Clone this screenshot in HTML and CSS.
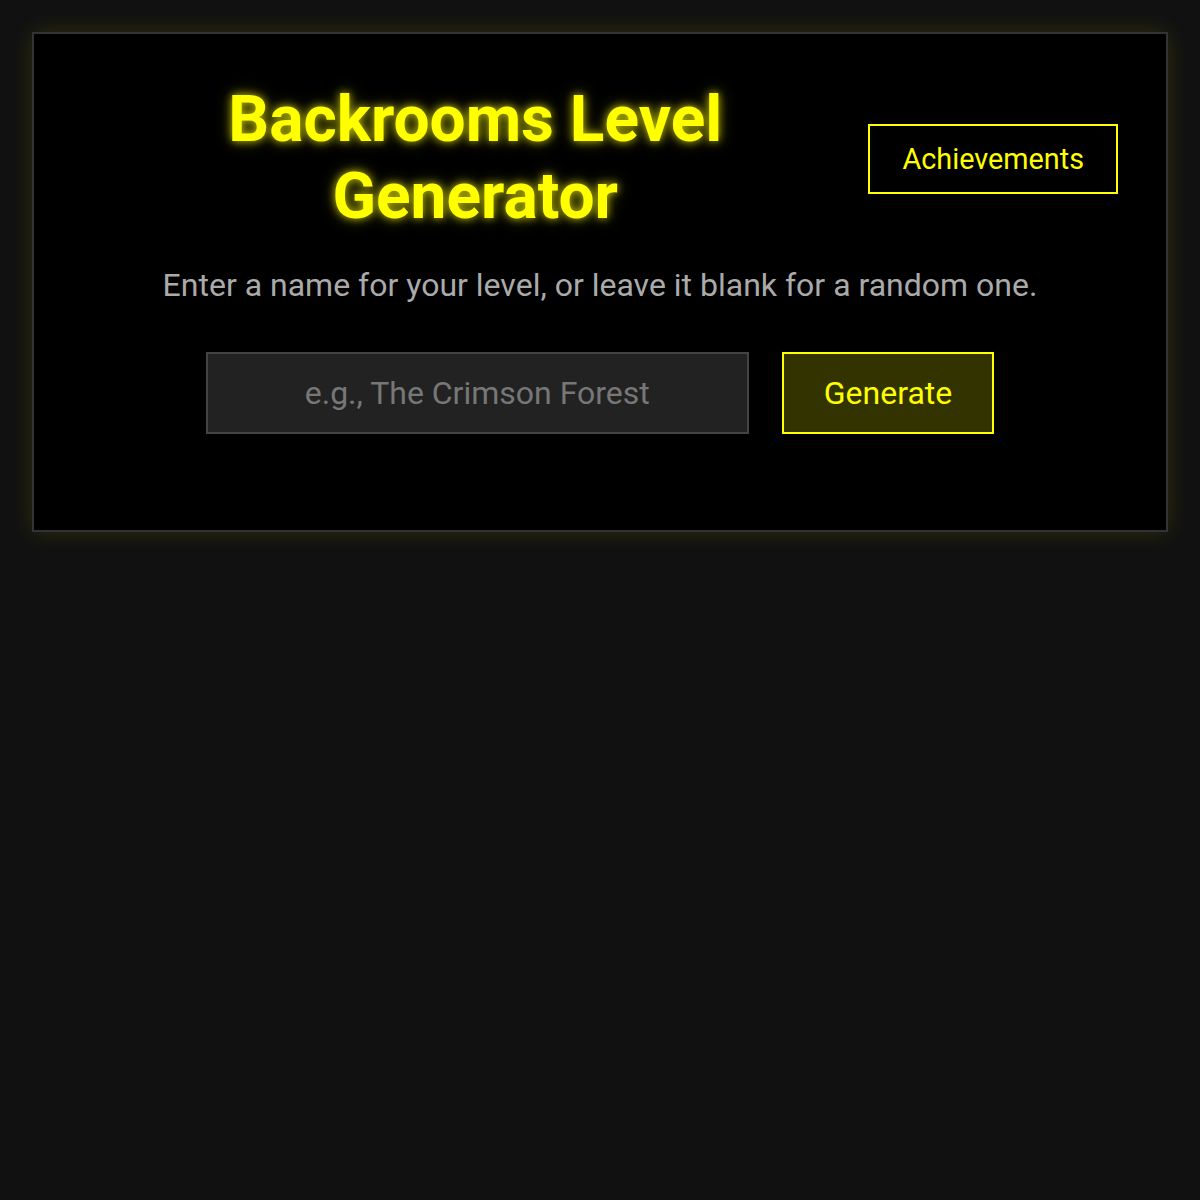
FILE: index.html
```html
<!DOCTYPE html>
<html lang="en">
<head>
  <meta charset="UTF-8" />
  <meta name="viewport" content="width=device-width, initial-scale=1.0"/>
  <title>Backrooms Level Generator</title>
  <link rel="stylesheet" href="styles.css">
</head>
<body>
  <div class="container">
    <div class="header">
      <h1 class="title">Backrooms Level Generator</h1>
      <button class="achievements-btn">Achievements</button>
    </div>
    <p class="subtitle">Enter a name for your level, or leave it blank for a random one.</p>
    <div class="controls">
      <input type="text" class="level-input" placeholder="e.g., The Crimson Forest" />
      <button class="generate-btn">Generate</button>
    </div>
  </div>
</body>
</html>
```

FILE: styles.css
```css
body {
  font-family: Roboto, "Liberation Sans", sans-serif;
  background-color: #111;
  margin: 0;
  padding: 32px;
}
.container {
  background-color: #000;
  border: 2px solid #333;
  box-shadow: 0 0 22px rgba(255, 255, 0, 0.12);
  padding: 48px 48px 96px;
}
.header {
  display: flex;
  align-items: center;
}
.title {
  flex: 1;
  margin: 0;
  font-size: 64px;
  font-weight: 700;
  line-height: 1.2;
  text-align: center;
  color: #ffff00;
  text-shadow: 0 0 8px rgba(255, 255, 0, 0.7), 0 0 16px rgba(255, 255, 0, 0.35);
}
button {
  font-family: inherit;
  color: #ffff00;
  border: 2px solid #ffff00;
  cursor: pointer;
}
.achievements-btn {
  font-size: 28.8px;
  background-color: #000;
  padding: 16px 32px;
}
.subtitle {
  margin: 30px 0 48px;
  text-align: center;
  font-size: 32px;
  color: #aaa;
}
.controls {
  display: flex;
  justify-content: center;
  gap: 33px;
}
.level-input {
  width: 543px;
  box-sizing: border-box;
  padding: 20px;
  font-family: inherit;
  font-size: 32px;
  text-align: center;
  color: #ddd;
  background-color: #222;
  border: 2px solid #444;
}
.level-input::placeholder {
  color: #777;
}
.generate-btn {
  font-size: 32px;
  background-color: #333300;
  padding: 0 40px;
}
```
